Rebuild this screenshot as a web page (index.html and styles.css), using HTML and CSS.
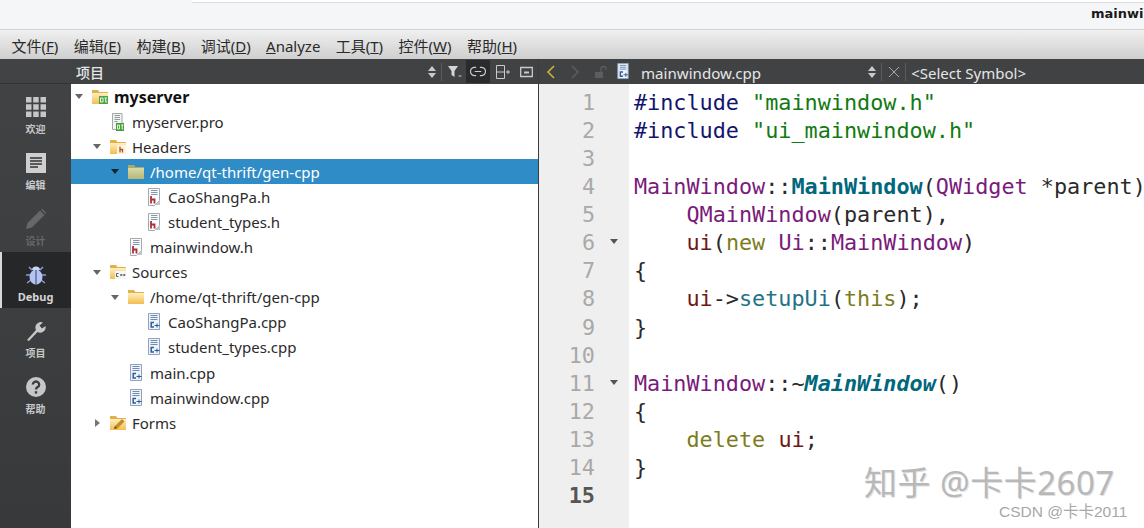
FILE: index.html
```html
<!DOCTYPE html>
<html lang="zh">
<head>
<meta charset="utf-8"/>
<title>mainwindow.cpp</title>
<link rel="stylesheet" href="styles.css">
</head>
<body>
<svg class="defs" width="0" height="0">
  <defs>
    <linearGradient id="fold-fill" x1="0" y1="0" x2="0" y2="1">
      <stop offset="0" stop-color="#fdf0c0"/>
      <stop offset="1" stop-color="#f3bd4e"/>
    </linearGradient>
    <linearGradient id="fold-sel" x1="0" y1="0" x2="0" y2="1">
      <stop offset="0" stop-color="#d9d9a6"/>
      <stop offset="1" stop-color="#b5b878"/>
    </linearGradient>
  </defs>
  <symbol id="folder-base" viewBox="0 0 16 14">
    <path d="M0 0h6l1.500 2H16v12H0z" fill="#e3b04a"/>
    <path d="M0 3h16v11H0z" fill="url(#fold-fill)"/>
  </symbol>
  <symbol id="folder" viewBox="0 0 16 14">
    <use href="#folder-base" width="16" height="14"/>
  </symbol>
  <symbol id="folder-sel" viewBox="0 0 16 14">
    <path d="M0 0h6l1.500 2H16v12H0z" fill="#a9aa6e"/>
    <path d="M0 3h16v11H0z" fill="url(#fold-sel)"/>
  </symbol>
  <symbol id="folder-qt" viewBox="0 0 16 14">
    <use href="#folder-base" width="16" height="14"/>
    <path d="M7 6h9v8H7z" fill="#4da443"/>
    <path d="M8.500 8h2.500v4H8.500zM12.500 8h2.500M13.700 8v4h1.500" fill="none" stroke="#e9f6e4"/>
  </symbol>
  <symbol id="folder-h" viewBox="0 0 16 14">
    <use href="#folder-base" width="16" height="14"/>
    <path d="M7 5h9v9H7z" fill="#fdf6dc"/>
    <path d="M10 6.500v6M10 9.500h2.500v3" fill="none" stroke="#b5502a" stroke-width="1.300"/>
  </symbol>
  <symbol id="folder-cpp" viewBox="0 0 16 14">
    <use href="#folder-base" width="16" height="14"/>
    <path d="M5 6h11v8H5z" fill="#f7f7ef"/>
    <path d="M8.500 8.500h-2v3h2M10 10h2.500M11.200 9v2M13 10h2.500M14.200 9v2" fill="none" stroke="#4c5f7e"/>
  </symbol>
  <symbol id="folder-ui" viewBox="0 0 16 14">
    <use href="#folder-base" width="16" height="14"/>
    <path d="M4 13l1-3 7-7 2.500 2.500-7 7z" fill="#c98a2b"/>
    <path d="M4 13l1-3 2 2z" fill="#6d4a1c"/>
  </symbol>
  <symbol id="file-h" viewBox="0 0 12 18">
    <path d="M.5.500h11v12l-5 5h-6z" fill="#fbfbfb" stroke="#a4a8b0"/>
    <path d="M3 2.500h6.500M3 4.500h6.500M3 6.500h6.500" stroke="#8296ad"/>
    <path d="M3 8v7.500M3 11.500h3.500v4" fill="none" stroke="#a9323a" stroke-width="1.800"/>
    <path d="M7 17l5-5v5z" fill="#c2c5ca"/>
  </symbol>
  <symbol id="file-cpp" viewBox="0 0 12 18">
    <path d="M.5.500h11v16h-11z" fill="#eef2f9" stroke="#8fa3bf"/>
    <path d="M2.500 2.500h7M2.500 4.500h7M2.500 6.500h7" stroke="#6f8ab3"/>
    <path d="M6 9.500H3.200v4.500H6" fill="none" stroke="#2d5d9c" stroke-width="1.500"/>
    <path d="M6.500 12.500h5M9 10.500v4" stroke="#2d5d9c"/>
  </symbol>
  <symbol id="file-pro" viewBox="0 0 12 18">
    <path d="M.5.500h9.500v16H.5z" fill="#f4f4f4" stroke="#a2a8a6"/>
    <path d="M2.500 2.500h5.500M2.500 4.500h5.500M2.500 6.500h5.500M2.500 8.500h3" stroke="#8b9aa0"/>
    <path d="M4 10h8v8H4z" fill="#45a03c"/>
    <path d="M5.500 12h2v4h-2zM9 12h2.500M10.200 12v4h1" fill="none" stroke="#e9f6e4"/>
  </symbol>
  <symbol id="up-down" viewBox="0 0 8 12">
    <path d="M4 0l4 5H0zM4 12l4-5H0z" fill="#c9cacb"/>
  </symbol>
</svg>

<div class="titlebar">
  <div class="titlebar-line"></div>
  <span class="window-title">mainwi</span>
</div>

<nav class="menubar">
  <span class="menu">文件(<u>F</u>)</span>
  <span class="menu">编辑(<u>E</u>)</span>
  <span class="menu">构建(<u>B</u>)</span>
  <span class="menu">调试(<u>D</u>)</span>
  <span class="menu"><u>A</u>nalyze</span>
  <span class="menu">工具(<u>T</u>)</span>
  <span class="menu">控件(<u>W</u>)</span>
  <span class="menu">帮助(<u>H</u>)</span>
</nav>

<div class="workspace">
  <aside class="modes">
    <div class="modes-top"></div>
    <div class="mode">
      <svg class="mode-icon" viewBox="0 0 20 20"><path d="M0 0h5.500v5.500H0zM7.200 0h5.500v5.500H7.200zM14.500 0H20v5.500h-5.500zM0 7.200h5.500v5.500H0zM7.200 7.200h5.500v5.500H7.200zM14.500 7.200H20v5.500h-5.500zM0 14.500h5.500V20H0zM7.200 14.500h5.500V20H7.200zM14.500 14.500H20V20h-5.500z" fill="#c6c7c8"/></svg>
      <span>欢迎</span>
    </div>
    <div class="mode">
      <svg class="mode-icon" viewBox="0 0 20 20"><path d="M0 0h20v20H0z" fill="#cfcfcf"/><path d="M4 5h12M4 8h12M4 11h12M4 14h8" stroke="#333" stroke-width="1.300"/></svg>
      <span>编辑</span>
    </div>
    <div class="mode mode-off">
      <svg class="mode-icon" viewBox="0 0 20 20"><path d="M0 20l1.500-6L14 1.500 18.500 6 6 18.500zM15 .5l1.500-.5 3.500 3.500-.5 1.500z" fill="#666768"/></svg>
      <span>设计</span>
    </div>
    <div class="mode mode-on">
      <svg class="mode-icon" viewBox="0 0 20 20"><path d="M3 2l3 3M17 2l-3 3M0 10h4M20 10h-4M1 18l4-3M19 18l-4-3" stroke="#8d9ed4" stroke-width="1.500"/><ellipse cx="10" cy="12" rx="6.500" ry="7.500" fill="#b3c3f2"/><path d="M6 5a4 3.500 0 0 1 8 0z" fill="#c9d5f6"/><path d="M10 5v14" stroke="#3d4560"/></svg>
      <span>Debug</span>
    </div>
    <div class="mode">
      <svg class="mode-icon" viewBox="0 0 20 20"><path d="M1 19l9-10a5.500 5.500 0 0 1 7-7.500l-3.500 3 2.500 3 3.500-2.500a5.500 5.500 0 0 1-8 6L3 20z" fill="#c6c7c8"/></svg>
      <span>项目</span>
    </div>
    <div class="mode">
      <svg class="mode-icon" viewBox="0 0 20 20"><circle cx="10" cy="10" r="10" fill="#c6c7c8"/><path d="M6.800 7.500a3.200 3 0 1 1 4.800 2.600c-1 .6-1.600 1.200-1.600 2.400" fill="none" stroke="#3b3c3e" stroke-width="2.300"/><path d="M8.800 14.200h2.400v2.400H8.800z" fill="#3b3c3e"/></svg>
      <span>帮助</span>
    </div>
  </aside>

  <section class="projects">
    <div class="toolbar">
      <span class="pane-title">项目</span>
      <svg class="tool-updown"><use href="#up-down"/></svg>
      <span class="tool-sep"></span>
      <svg class="tool-filter" viewBox="0 0 14 13"><path d="M0 1h10L6.500 6v6L3.500 10V6z" fill="#d4d5d6"/><path d="M10.500 11h3" stroke="#c9cacb"/></svg>
      <span class="tool-on"><svg viewBox="0 0 16 16"><path d="M6 3.500H4.500a4.500 4.500 0 0 0 0 9H6M10 3.500h1.500a4.500 4.500 0 0 1 0 9H10M4.500 8h7" fill="none" stroke="#c9cacb" stroke-width="1.300"/></svg></span>
      <svg class="tool-split" viewBox="0 0 14 14"><path d="M.5 .5h8v13h-8zM.5 7h8M10 7h4M12 5v4" fill="none" stroke="#c9cacb"/></svg>
      <svg class="tool-close" viewBox="0 0 13 12"><path d="M.7 1.500h11.600v9H.7z" fill="none" stroke="#c9cacb" stroke-width="1.300"/><path d="M4 6.500h5" stroke="#c9cacb" stroke-width="2"/></svg>
    </div>
    <ul class="tree">
      <li class="row"><i class="arrow"></i><svg class="ico-folder"><use href="#folder-qt"/></svg><b class="root-name">myserver</b></li>
      <li class="row pro"><svg class="ico-file"><use href="#file-pro"/></svg>myserver.pro</li>
      <li class="row d1"><i class="arrow"></i><svg class="ico-folder"><use href="#folder-h"/></svg>Headers</li>
      <li class="row d2 selected"><i class="arrow"></i><svg class="ico-folder"><use href="#folder-sel"/></svg>/home/qt-thrift/gen-cpp</li>
      <li class="row f3"><svg class="ico-file"><use href="#file-h"/></svg>CaoShangPa.h</li>
      <li class="row f3"><svg class="ico-file"><use href="#file-h"/></svg>student_types.h</li>
      <li class="row f2"><svg class="ico-file"><use href="#file-h"/></svg>mainwindow.h</li>
      <li class="row d1"><i class="arrow"></i><svg class="ico-folder"><use href="#folder-cpp"/></svg>Sources</li>
      <li class="row d2"><i class="arrow"></i><svg class="ico-folder"><use href="#folder"/></svg>/home/qt-thrift/gen-cpp</li>
      <li class="row f3"><svg class="ico-file"><use href="#file-cpp"/></svg>CaoShangPa.cpp</li>
      <li class="row f3"><svg class="ico-file"><use href="#file-cpp"/></svg>student_types.cpp</li>
      <li class="row f2"><svg class="ico-file"><use href="#file-cpp"/></svg>main.cpp</li>
      <li class="row f2"><svg class="ico-file"><use href="#file-cpp"/></svg>mainwindow.cpp</li>
      <li class="row d1"><i class="arrow arrow-closed"></i><svg class="ico-folder"><use href="#folder-ui"/></svg>Forms</li>
    </ul>
  </section>

  <section class="editor">
    <div class="editbar">
      <svg class="nav" viewBox="0 0 10 16"><path d="M8 2L2 8l6 6" fill="none" stroke="#c9b53a" stroke-width="1.600"/></svg>
      <svg class="nav nav-next" viewBox="0 0 10 16"><path d="M2 2l6 6-6 6" fill="none" stroke="#5c5d5f" stroke-width="1.600"/></svg>
      <svg class="lock" viewBox="0 0 14 14"><path d="M1 7h8v6H1z" fill="#5c5d5f"/><path d="M7 7V4a2.500 2.500 0 0 1 5 0v1" fill="none" stroke="#5c5d5f" stroke-width="1.300"/></svg>
      <svg class="ico-tab"><use href="#file-cpp"/></svg>
      <span class="file-name">mainwindow.cpp</span>
      <svg class="tool-updown"><use href="#up-down"/></svg>
      <span class="tool-sep sep-a"></span>
      <svg class="close" viewBox="0 0 12 12"><path d="M1 1l10 10M11 1L1 11" stroke="#a9aaab"/></svg>
      <span class="tool-sep sep-b"></span>
      <span class="symbol">&lt;Select Symbol&gt;</span>
    </div>
    <div class="code-area">
      <div class="gutter">
        <div class="ln">1</div>
        <div class="ln">2</div>
        <div class="ln">3</div>
        <div class="ln">4</div>
        <div class="ln">5</div>
        <div class="ln fold">6</div>
        <div class="ln">7</div>
        <div class="ln">8</div>
        <div class="ln">9</div>
        <div class="ln">10</div>
        <div class="ln fold">11</div>
        <div class="ln">12</div>
        <div class="ln">13</div>
        <div class="ln">14</div>
        <div class="ln current">15</div>
      </div>
      <pre class="code"><span class="pp">#include</span> <span class="str">"mainwindow.h"</span>
<span class="pp">#include</span> <span class="str">"ui_mainwindow.h"</span>

<span class="ty">MainWindow</span>::<span class="fn">MainWindow</span>(<span class="ty">QWidget</span> *<span class="par">parent</span>)
    <span class="ty">QMainWindow</span>(<span class="par">parent</span>),
    <span class="mem">ui</span>(<span class="kw">new</span> <span class="ty">Ui</span>::<span class="ty">MainWindow</span>)
{
    <span class="mem">ui</span>-&gt;<span class="call">setupUi</span>(<span class="kw">this</span>);
}

<span class="ty">MainWindow</span>::~<span class="dtor">MainWindow</span>()
{
    <span class="kw">delete</span> <span class="mem">ui</span>;
}
</pre>
    </div>
  </section>
</div>

<div class="mark-zhihu">知乎 @卡卡2607</div>
<div class="mark-csdn">CSDN @卡卡2011</div>
</body>
</html>
```

FILE: styles.css
```css
* {
  box-sizing: border-box;
}
html, body {
  height: 528px;
  overflow: hidden;
}
body {
  margin: 0;
  position: relative;
  background: #fff;
  color: #222;
  font-family: "Noto Sans", "Noto Sans CJK SC", sans-serif;
}
.defs {
  position: absolute;
}

.titlebar {
  height: 30px;
  background: #f5f6f8;
  border-bottom: 1px solid #d2d2d2;
  position: relative;
  overflow: hidden;
}
.titlebar-line {
  height: 3px;
  margin-left: 192px;
  background: #fff;
  border-bottom: 1px solid #dcdcdc;
}
.window-title {
  position: absolute;
  left: 1091px;
  top: 6px;
  font-family: "DejaVu Sans", sans-serif;
  font-size: 13px;
  font-weight: bold;
  color: #1a1a1a;
}

.menubar {
  height: 29px;
  display: flex;
  align-items: center;
  padding: 2px 0 0 11.5px;
  gap: 15.4px;
  background: linear-gradient(to bottom, #f0f0f0, #cfcfcf);
  font-size: 15px;
  color: #2a2a2a;
}

.workspace {
  display: flex;
  height: 469px;
}

.modes {
  width: 71px;
  flex: none;
  background: linear-gradient(to bottom, #414345, #38393b);
  color: #c8c9ca;
}
.modes-top {
  height: 25px;
  border-bottom: 1px solid #333;
}
.mode {
  height: 56px;
  display: flex;
  flex-direction: column;
  align-items: center;
  justify-content: flex-end;
  padding-bottom: 4px;
  font-size: 10px;
  font-weight: bold;
  line-height: 14px;
}
.mode-icon {
  width: 20px;
  height: 20px;
  margin-bottom: 5px;
}
.mode-off {
  color: #666768;
}
.mode-on {
  background: #262728;
  border-left: 2px solid #d8d8d8;
  color: #d5d5d6;
  padding-right: 2px;
  font-size: 11px;
}

.projects {
  width: 468px;
  flex: none;
  border-right: 1px solid #3b3c3e;
  display: flex;
  flex-direction: column;
}
.toolbar, .editbar {
  height: 25px;
  flex: none;
  display: flex;
  align-items: center;
  background: #404244;
  color: #e6e6e6;
  font-size: 14px;
}
.pane-title {
  margin-left: 5px;
  margin-right: auto;
  font-weight: 500;
}
.tool-updown {
  width: 8px;
  height: 12px;
}
.tool-sep {
  width: 1px;
  height: 18px;
  margin: 0 6px 0 5px;
  background: #5b5c5e;
}
.tool-filter {
  width: 14px;
  height: 13px;
}
.tool-on {
  width: 24px;
  height: 23px;
  margin-left: 4px;
  padding: 4px;
  background: #2a2b2c;
}
.tool-on svg {
  display: block;
  width: 16px;
  height: 15px;
}
.tool-split {
  width: 14px;
  height: 14px;
  margin-left: 6px;
}
.tool-close {
  width: 13px;
  height: 12px;
  margin: 0 5px 0 10px;
}

.tree {
  list-style: none;
  margin: 0;
  padding: 0;
  flex: 1;
  background: #fff;
  font-size: 15px;
  color: #2b2b2b;
}
.row {
  height: 25.1px;
  display: flex;
  align-items: center;
  padding-left: 4px;
  white-space: nowrap;
}
.d1 {
  padding-left: 22px;
}
.d2 {
  padding-left: 40px;
}
.pro {
  padding-left: 41px;
}
.f2 {
  padding-left: 59px;
}
.f3 {
  padding-left: 77px;
}
.selected {
  background: #308cc6;
  color: #fff;
}
.arrow {
  width: 0;
  height: 0;
  margin-right: 9px;
  border-left: 4px solid transparent;
  border-right: 4px solid transparent;
  border-top: 5px solid #666;
}
.selected .arrow {
  border-top-color: #123;
}
.arrow-closed {
  margin-left: 2px;
  margin-right: 10px;
  border-top: 4px solid transparent;
  border-bottom: 4px solid transparent;
  border-left: 5px solid #777;
  border-right: 0;
}
.ico-folder {
  width: 16px;
  height: 14px;
  margin-right: 6px;
}
.ico-file {
  width: 12px;
  height: 18px;
  margin-right: 8px;
}
.root-name {
  font-size: 16px;
  color: #111;
}

.editor {
  flex: 1;
  min-width: 0;
  display: flex;
  flex-direction: column;
}
.nav {
  width: 10px;
  height: 16px;
  margin-left: 7px;
}
.nav-next {
  margin-left: 14px;
}
.lock {
  width: 14px;
  height: 14px;
  margin-left: 14px;
}
.ico-tab {
  width: 12px;
  height: 17px;
  margin-left: 9px;
}
.file-name {
  margin: 2px auto 0 12px;
  font-size: 15.1px;
}
.sep-a {
  margin: 0 6px 0 5px;
}
.sep-b {
  margin: 0 5px 0 5px;
}
.close {
  width: 12px;
  height: 12px;
}
.symbol {
  margin: 2px 118px 0 0;
  font-size: 15px;
}

.code-area {
  flex: 1;
  display: flex;
  overflow: hidden;
}
.gutter {
  width: 90px;
  flex: none;
  padding: 5px 34px 0 0;
  background: #efefef;
  font-family: "DejaVu Sans Mono", monospace;
  font-size: 21.8px;
  line-height: 28.07px;
  color: #a9a9a9;
  text-align: right;
}
.ln {
  height: 28.07px;
  position: relative;
}
.fold::after {
  content: "";
  position: absolute;
  right: -23px;
  top: 10px;
  border-left: 4px solid transparent;
  border-right: 4px solid transparent;
  border-top: 5px solid #555;
}
.current {
  color: #555;
  font-weight: bold;
}
.code {
  margin: 0;
  padding: 5px 0 0 5px;
  flex: 1;
  white-space: pre;
  font-family: "DejaVu Sans Mono", monospace;
  font-size: 21.8px;
  line-height: 28.07px;
  color: #2a2a2a;
}
.pp {
  color: #14146e;
}
.str {
  color: #117a11;
}
.ty {
  color: #7a1a7a;
}
.fn {
  color: #00677c;
  font-weight: bold;
}
.dtor {
  color: #00677c;
  font-weight: bold;
  font-style: italic;
}
.call {
  color: #1f7385;
}
.par {
  color: #2a2a2a;
}
.mem {
  color: #701818;
}
.kw {
  color: #7c7c1c;
}

.mark-zhihu {
  position: absolute;
  left: 864px;
  top: 457px;
  font-size: 33px;
  letter-spacing: 0.5px;
  color: #b8b8b8;
  text-shadow: 1px 1px 0 #e2e2e2;
  white-space: nowrap;
}
.mark-csdn {
  position: absolute;
  left: 999px;
  top: 499px;
  font-family: "Liberation Sans", "Noto Sans CJK SC", sans-serif;
  font-size: 15.5px;
  color: #a8a8a8;
  white-space: nowrap;
}
```
